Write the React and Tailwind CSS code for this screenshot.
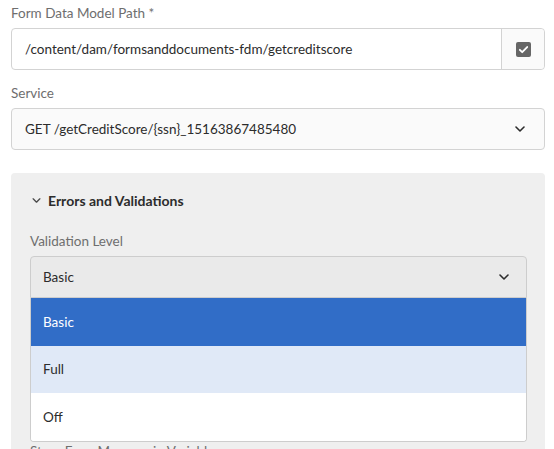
import React from "react";

const Chevron = ({ className }) => (
  <svg viewBox="0 0 10 6" className={className} fill="none">
    <path d="M1 1l4 4 4-4" stroke="currentColor" strokeWidth="1.6" strokeLinecap="round" strokeLinejoin="round" />
  </svg>
);

const options = [
  { label: "Basic", cls: "h-[48px] flex items-center pl-[12px] bg-[#316dc7] text-white" },
  { label: "Full", cls: "h-[47px] flex items-center pl-[12px] bg-[#e0e9f7] text-[#2c2c2c]" },
  { label: "Off", cls: "h-[48px] flex items-center pl-[12px] bg-white text-[#2c2c2c]" },
];

const App = () => {
  return (
    <div className="w-[554px] h-[449px] overflow-hidden bg-white pl-[11px] pr-[9px] pt-[4px] font-['Lato','Open_Sans',sans-serif] text-[13.5px]">
      <p className="h-[18px] leading-[18px] text-[#6e6e6e] mb-[6px]">Form Data Model Path *</p>
      <div className="h-[42px] flex border border-[#d3d3d3] rounded-[4px] bg-white">
        <div className="flex-1 flex items-center px-[13px] text-[#2c2c2c]">
          /content/dam/formsanddocuments-fdm/getcreditscore
        </div>
        <div className="w-[43px] flex items-center justify-center border-l border-[#d3d3d3] bg-[#fafafa] rounded-r-[4px]">
          <span className="w-[15px] h-[15px] rounded-[2px] bg-[#666666] flex items-center justify-center">
            <svg viewBox="0 0 12 12" className="w-[11px] h-[11px]" fill="none">
              <path d="M2 6.3l2.6 2.6L10 3.3" stroke="white" strokeWidth="2" strokeLinecap="round" strokeLinejoin="round" />
            </svg>
          </span>
        </div>
      </div>

      <p className="h-[18px] leading-[18px] text-[#6e6e6e] mt-[14px] mb-[6px]">Service</p>
      <div className="h-[42px] flex items-center justify-between border border-[#d3d3d3] rounded-[4px] bg-[#fafafa] pl-[13px] pr-[19px] text-[#2c2c2c]">
        <span>GET /getCreditScore/{"{ssn}"}_15163867485480</span>
        <Chevron className="w-[10px] h-[6px] text-[#2c2c2c]" />
      </div>

      <div className="mt-[23px] bg-[#efefef] rounded-[4px] pt-[17px] pl-[19px] pr-[18px] pb-[20px]">
        <div className="h-[20px] flex items-center gap-[7px] pl-[2px] text-[14px]">
          <Chevron className="w-[9px] h-[5px] text-[#4b4b4b]" />
          <span className="font-bold text-[#2c2c2c]">Errors and Validations</span>
        </div>

        <p className="h-[18px] leading-[18px] text-[#6e6e6e] mt-[22px] mb-[6px]">Validation Level</p>
        <div className="h-[42px] flex items-center justify-between border border-[#cdcdcd] rounded-t-[4px] bg-[#eaeaea] pl-[12px] pr-[17px] text-[#2c2c2c]">
          <span>Basic</span>
          <Chevron className="w-[10px] h-[6px] text-[#2c2c2c]" />
        </div>
        <ul className="border-x border-b border-[#cdcdcd] rounded-b-[4px] bg-white overflow-hidden">
          {options.map((opt) => (
            <li key={opt.label} className={opt.cls}>
              {opt.label}
            </li>
          ))}
        </ul>
        <p className="h-[18px] leading-[18px] text-[#6e6e6e]">Store Error Message in Variable</p>
      </div>
    </div>
  );
};

export default App;
